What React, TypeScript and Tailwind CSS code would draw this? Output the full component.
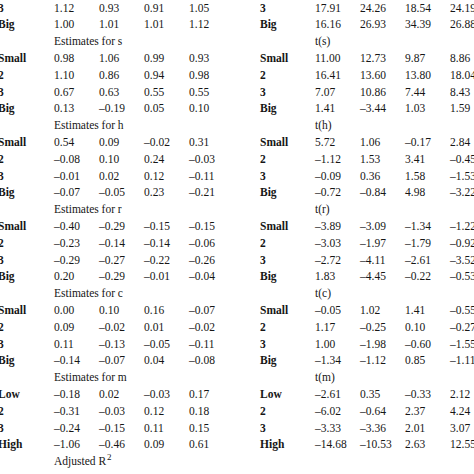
import React from "react";

type Row = { label?: string; head?: React.ReactNode; vals?: string[] };

const L: Row[] = [
  { label: "3", vals: ["1.12", "0.93", "0.91", "1.05"] },
  { label: "Big", vals: ["1.00", "1.01", "1.01", "1.12"] },
  { head: "Estimates for s" },
  { label: "Small", vals: ["0.98", "1.06", "0.99", "0.93"] },
  { label: "2", vals: ["1.10", "0.86", "0.94", "0.98"] },
  { label: "3", vals: ["0.67", "0.63", "0.55", "0.55"] },
  { label: "Big", vals: ["0.13", "–0.19", "0.05", "0.10"] },
  { head: "Estimates for h" },
  { label: "Small", vals: ["0.54", "0.09", "–0.02", "0.31"] },
  { label: "2", vals: ["–0.08", "0.10", "0.24", "–0.03"] },
  { label: "3", vals: ["–0.01", "0.02", "0.12", "–0.11"] },
  { label: "Big", vals: ["–0.07", "–0.05", "0.23", "–0.21"] },
  { head: "Estimates for r" },
  { label: "Small", vals: ["–0.40", "–0.29", "–0.15", "–0.15"] },
  { label: "2", vals: ["–0.23", "–0.14", "–0.14", "–0.06"] },
  { label: "3", vals: ["–0.29", "–0.27", "–0.22", "–0.26"] },
  { label: "Big", vals: ["0.20", "–0.29", "–0.01", "–0.04"] },
  { head: "Estimates for c" },
  { label: "Small", vals: ["0.00", "0.10", "0.16", "–0.07"] },
  { label: "2", vals: ["0.09", "–0.02", "0.01", "–0.02"] },
  { label: "3", vals: ["0.11", "–0.13", "–0.05", "–0.11"] },
  { label: "Big", vals: ["–0.14", "–0.07", "0.04", "–0.08"] },
  { head: "Estimates for m" },
  { label: "Low", vals: ["–0.18", "0.02", "–0.03", "0.17"] },
  { label: "2", vals: ["–0.31", "–0.03", "0.12", "0.18"] },
  { label: "3", vals: ["–0.24", "–0.15", "0.11", "0.15"] },
  { label: "High", vals: ["–1.06", "–0.46", "0.09", "0.61"] },
  {
    head: (
      <>
        Adjusted R
        <span className="text-[9px] relative -top-[4px] ml-[1px]">2</span>
      </>
    ),
  },
];

const R: Row[] = [
  { label: "3", vals: ["17.91", "24.26", "18.54", "24.19"] },
  { label: "Big", vals: ["16.16", "26.93", "34.39", "26.88"] },
  { head: "t(s)" },
  { label: "Small", vals: ["11.00", "12.73", "9.87", "8.86"] },
  { label: "2", vals: ["16.41", "13.60", "13.80", "18.04"] },
  { label: "3", vals: ["7.07", "10.86", "7.44", "8.43"] },
  { label: "Big", vals: ["1.41", "–3.44", "1.03", "1.59"] },
  { head: "t(h)" },
  { label: "Small", vals: ["5.72", "1.06", "–0.17", "2.84"] },
  { label: "2", vals: ["–1.12", "1.53", "3.41", "–0.45"] },
  { label: "3", vals: ["–0.09", "0.36", "1.58", "–1.53"] },
  { label: "Big", vals: ["–0.72", "–0.84", "4.98", "–3.22"] },
  { head: "t(r)" },
  { label: "Small", vals: ["–3.89", "–3.09", "–1.34", "–1.22"] },
  { label: "2", vals: ["–3.03", "–1.97", "–1.79", "–0.92"] },
  { label: "3", vals: ["–2.72", "–4.11", "–2.61", "–3.52"] },
  { label: "Big", vals: ["1.83", "–4.45", "–0.22", "–0.53"] },
  { head: "t(c)" },
  { label: "Small", vals: ["–0.05", "1.02", "1.41", "–0.55"] },
  { label: "2", vals: ["1.17", "–0.25", "0.10", "–0.27"] },
  { label: "3", vals: ["1.00", "–1.98", "–0.60", "–1.55"] },
  { label: "Big", vals: ["–1.34", "–1.12", "0.85", "–1.11"] },
  { head: "t(m)" },
  { label: "Low", vals: ["–2.61", "0.35", "–0.33", "2.12"] },
  { label: "2", vals: ["–6.02", "–0.64", "2.37", "4.24"] },
  { label: "3", vals: ["–3.33", "–3.36", "2.01", "3.07"] },
  { label: "High", vals: ["–14.68", "–10.53", "2.63", "12.55"] },
];

function Block({ rows, left }: { rows: Row[]; left: boolean }) {
  return (
    <div
      className={
        left
          ? "grid grid-cols-[56px_45px_45px_45px_71px] auto-rows-[16.8px] -ml-[2px] shrink-0"
          : "grid grid-cols-[55px_45px_45px_45px_60px] auto-rows-[16.8px] shrink-0"
      }
    >
      {rows.map((r, i) =>
        r.head ? (
          <div key={i} className="col-start-2 col-span-4 flex items-center whitespace-nowrap">
            {r.head}
          </div>
        ) : (
          <React.Fragment key={i}>
            <div className="font-bold flex items-center whitespace-nowrap">{r.label}</div>
            {r.vals!.map((v, j) => (
              <div key={j} className="flex items-center whitespace-nowrap">
                {v}
              </div>
            ))}
          </React.Fragment>
        )
      )}
    </div>
  );
}

export default function App() {
  return (
    <div
      className="w-[474px] h-[474px] overflow-hidden bg-white text-[#161616] text-[11.5px] leading-none flex"
      style={{ fontFamily: '"Liberation Serif", "Times New Roman", serif' }}
    >
      <Block rows={L} left />
      <Block rows={R} left={false} />
    </div>
  );
}
